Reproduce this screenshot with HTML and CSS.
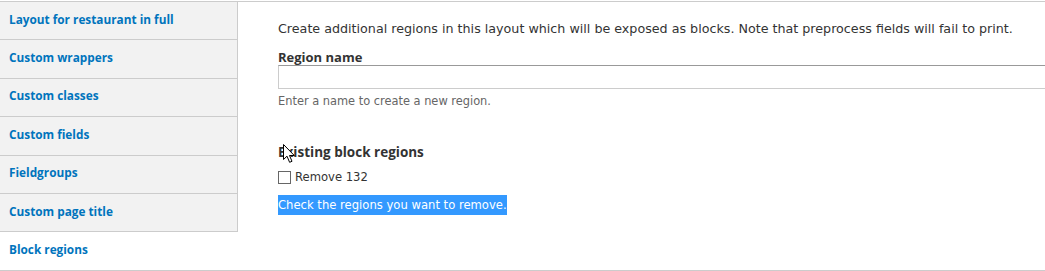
FILE: index.html
```html
<!DOCTYPE html>
<html>
<head>
<meta charset="utf-8">
<link rel="stylesheet" href="styles.css">
</head>
<body>
<div class="vtabs">
  <ul class="tab-list">
    <li class="tab"><a href="#">Layout for restaurant in full</a></li>
    <li class="tab"><a href="#">Custom wrappers</a></li>
    <li class="tab"><a href="#">Custom classes</a></li>
    <li class="tab"><a href="#">Custom fields</a></li>
    <li class="tab"><a href="#">Fieldgroups</a></li>
    <li class="tab"><a href="#">Custom page title</a></li>
    <li class="tab selected"><a href="#">Block regions</a></li>
  </ul>
  <div class="pane">
    <p class="intro">Create additional regions in this layout which will be exposed as blocks. Note that preprocess fields will fail to print.</p>
    <div class="field">
      <label class="field-label">Region name</label>
      <input class="text-input" type="text">
      <div class="help">Enter a name to create a new region.</div>
    </div>
    <h3 class="heading">Existing block regions</h3>
    <div class="check-row">
      <span class="checkbox"></span>
      <span class="check-label">Remove 132</span>
    </div>
    <div class="desc"><span class="selected-text">Check the regions you want to remove.</span></div>
    <svg class="cursor" width="13" height="20" viewBox="0 0 13 20"><path d="M0.5 0.5 L0.5 15.5 L4 12.2 L6.6 18.3 L9 17.3 L6.5 11.5 L11.3 11.5 Z" fill="#fff" stroke="#000" stroke-width="1" stroke-linejoin="miter"/></svg>
  </div>
</div>
</body>
</html>
```
FILE: styles.css
```css
* { box-sizing: border-box; }
html, body { margin: 0; padding: 0; background: #fff; }
body {
  padding-top: 1px;
  font-family: "DejaVu Sans", "Open Sans", sans-serif;
  font-size: 12px;
  color: #333;
}
.vtabs {
  display: flex;
  border-top: 1px solid #ccc;
  border-bottom: 1px solid #ccc;
  height: 270px;
}
.tab-list {
  list-style: none;
  margin: 0;
  padding: 0;
  width: 238px;
  flex: none;
}
.tab {
  height: 38.4px;
  background: #f2f2f2;
  border-bottom: 1px solid #ccc;
  border-right: 1px solid #ccc;
  display: flex;
  align-items: center;
  padding: 0 0 4px 9px;
}
.tab a {
  font-family: "Open Sans", sans-serif;
  color: #0074bd;
  font-weight: bold;
  font-size: 11.8px;
  text-decoration: none;
}
.tab.selected {
  background: #fff;
  border-bottom: none;
  border-right: none;
  height: 37px;
}
.pane {
  position: relative;
  flex: 1;
  padding: 0 0 0 40px;
}
.intro {
  margin: 18px 0 0;
  font-size: 12.7px;
  line-height: 18px;
}
.field { margin-top: 11px; }
.field-label {
  display: block;
  font-family: "Open Sans", sans-serif;
  font-size: 13px;
  font-weight: bold;
  line-height: 16px;
}
.text-input {
  display: block;
  width: 800px;
  height: 24px;
  margin: 0;
  border: 1px solid #ccc;
  border-top-color: #999;
  padding: 0;
  background: #fff;
}
.help {
  margin-top: 4px;
  font-size: 11.4px;
  color: #666;
  line-height: 16px;
}
.heading {
  margin: 34px 0 0;
  font-family: "Open Sans", sans-serif;
  font-size: 13.5px;
  line-height: 18px;
  font-weight: bold;
}
.check-row {
  display: flex;
  align-items: center;
  margin-top: 8px;
  height: 16px;
}
.checkbox {
  width: 13px;
  height: 13px;
  border: 1px solid #666;
  margin-right: 4px;
  background: #fff;
}
.check-label { line-height: 16px; font-size: 11.6px; }
.desc {
  margin-top: 10px;
  line-height: 20px;
}
.selected-text {
  background: #3399ff;
  color: #fff;
  display: inline-block;
  font-size: 11.6px;
  line-height: 20px;
}
.cursor {
  position: absolute;
  left: 45px;
  top: 142px;
}
```
